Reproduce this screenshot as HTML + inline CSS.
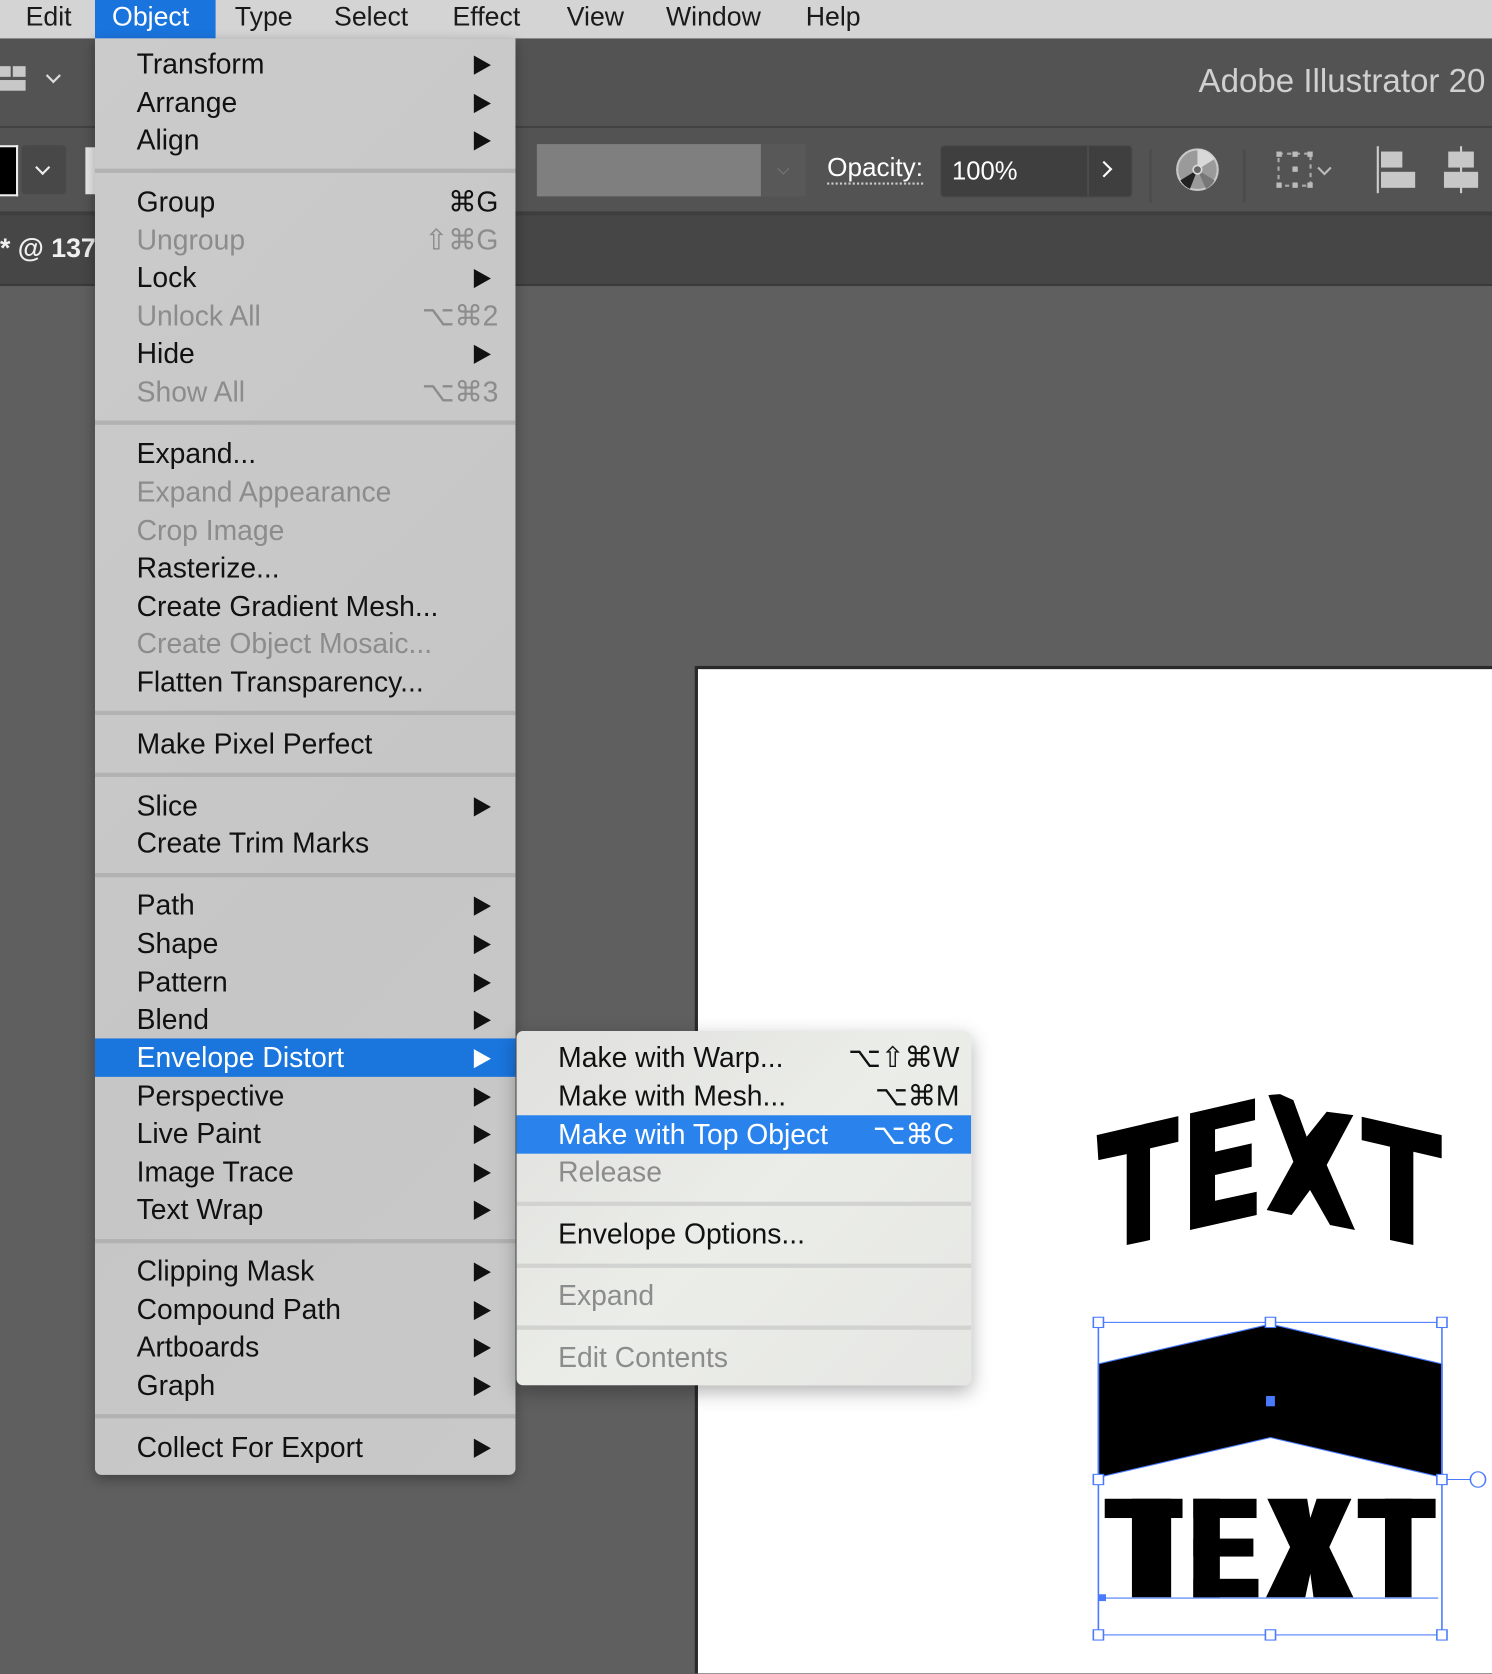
<!DOCTYPE html>
<html><head><meta charset="utf-8">
<style>
html,body{margin:0;padding:0;width:1492px;height:1674px;overflow:hidden;background:#5f5f5f}
#root{position:absolute;left:0;top:0;width:1398px;height:1568px;transform:scale(1.06724);transform-origin:0 0;font-family:"Liberation Sans",sans-serif;background:#5f5f5f;overflow:hidden}
.abs{position:absolute}
.mb{position:absolute;top:0;height:36px;line-height:32px;font-size:25px;color:#1a1a1a}
.it{position:absolute;left:0;width:394px;height:36px;line-height:36px;font-size:26.5px;color:#111}
.it span.t{position:absolute;left:39px}
.it span.a{position:absolute;left:355px;top:10px;width:0;height:0;border-left:16px solid #111;border-top:9px solid transparent;border-bottom:9px solid transparent}
.it span.s{position:absolute;right:16px}
.dis{color:#8c8c8c!important}
.sep{position:absolute;left:0;width:394px;height:4px;background:#b2b2b2}
.sit{position:absolute;left:0;width:426px;height:36px;line-height:36px;font-size:26.5px;color:#111}
.sit span.t{position:absolute;left:39px}
.sit span.s{position:absolute;right:11px}
.ssep{position:absolute;left:0;width:426px;height:4px;background:#d2d3d0}
</style></head><body>
<div id="root">
<div class="abs" style="left:0;top:36px;width:1398px;height:82px;background:#535353"></div>
<div class="abs" style="left:0;top:118px;width:1398px;height:2px;background:#424242"></div>
<div class="abs" style="left:0;top:120px;width:1398px;height:78px;background:#535353"></div>
<div class="abs" style="left:0;top:198px;width:1398px;height:4px;background:#3e3e3e"></div>
<div class="abs" style="left:0;top:202px;width:1398px;height:66px;background:#464646"></div>
<div class="abs" style="left:0;top:266px;width:1398px;height:2px;background:#3a3a3a"></div>
<div class="abs" style="left:1123px;top:58px;font-size:31px;color:#d0d0d0">Adobe Illustrator 20</div>
<div class="abs" style="left:0;top:62px;width:10px;height:10px;background:#c8c8c8"></div>
<div class="abs" style="left:12px;top:62px;width:12px;height:10px;background:#c8c8c8"></div>
<div class="abs" style="left:0;top:75px;width:24px;height:10px;background:#c8c8c8"></div>
<div class="abs" style="left:45px;top:66px;width:8px;height:8px;border-right:2px solid #ddd;border-bottom:2px solid #ddd;transform:rotate(45deg)"></div>
<div class="abs" style="left:0;top:136px;width:15px;height:44px;background:#000;border:2px solid #eee;border-left:none"></div>
<div class="abs" style="left:20px;top:136px;width:42px;height:46px;background:#484848;border-radius:4px"></div>
<div class="abs" style="left:35px;top:152px;width:8px;height:8px;border-right:2px solid #eee;border-bottom:2px solid #eee;transform:rotate(45deg)"></div>
<div class="abs" style="left:80px;top:138px;width:10px;height:44px;background:#e8e8e8"></div>
<div class="abs" style="left:0;top:219px;font-size:25px;font-weight:bold;color:#f0f0f0">* @ 137</div>
<div class="abs" style="left:503px;top:135px;width:210px;height:49px;background:#7f7f7f"></div>
<div class="abs" style="left:713px;top:135px;width:42px;height:49px;background:#585858"></div>
<div class="abs" style="left:730px;top:154px;width:7px;height:7px;border-right:1.5px solid #777;border-bottom:1.5px solid #777;transform:rotate(45deg)"></div>
<div class="abs" style="left:775px;top:145px;font-size:24.5px;color:#fff;border-bottom:2px dotted #ccc;line-height:26px">Opacity:</div>
<div class="abs" style="left:881px;top:136px;width:178px;height:47px;background:#3f3f3f;border:1px solid #4a4a4a;border-radius:4px"></div>
<div class="abs" style="left:1019px;top:137px;width:1px;height:46px;background:#555"></div>
<div class="abs" style="left:892px;top:147px;font-size:24px;color:#fff">100%</div>
<div class="abs" style="left:1029px;top:153px;width:9px;height:9px;border-right:2px solid #fff;border-top:2px solid #fff;transform:rotate(45deg)"></div>
<div class="abs" style="left:1077px;top:140px;width:2px;height:50px;background:#4a4a4a"></div>
<div class="abs" style="left:1165px;top:140px;width:2px;height:50px;background:#4a4a4a"></div>
<svg class="abs" style="left:1100px;top:137px" width="44" height="44" viewBox="0 0 44 44"><circle cx="22" cy="22" r="19" fill="#9a9a9a" stroke="#c8c8c8" stroke-width="2"/><path d="M22 22L22 3A19 19 0 0 1 38 12Z" fill="#d8d8d8"/><path d="M22 22L6 32A19 19 0 0 0 15 40Z" fill="#222"/><path d="M22 22L38 32A19 19 0 0 1 30 40Z" fill="#777"/><circle cx="22" cy="22" r="4" fill="#666" stroke="#ddd" stroke-width="1.5"/></svg>
<svg class="abs" style="left:1194px;top:140px" width="60" height="40" viewBox="0 0 60 40"><rect x="4" y="4" width="30" height="30" fill="none" stroke="#aaa" stroke-width="2" stroke-dasharray="4 4"/><rect x="2" y="2" width="5" height="5" fill="#bbb"/><rect x="17" y="2" width="5" height="5" fill="#bbb"/><rect x="31" y="2" width="5" height="5" fill="#bbb"/><rect x="2" y="31" width="5" height="5" fill="#bbb"/><rect x="17" y="31" width="5" height="5" fill="#bbb"/><rect x="31" y="31" width="5" height="5" fill="#bbb"/><rect x="17" y="16" width="5" height="5" fill="#bbb"/><path d="M41 17l6 6 6-6" fill="none" stroke="#bbb" stroke-width="2"/></svg>
<div class="abs" style="left:1290px;top:137px;width:2px;height:44px;background:#ccc"></div>
<div class="abs" style="left:1294px;top:142px;width:20px;height:15px;background:#c8c8c8"></div>
<div class="abs" style="left:1294px;top:161px;width:32px;height:15px;background:#c8c8c8"></div>
<div class="abs" style="left:1368px;top:137px;width:2px;height:44px;background:#ccc"></div>
<div class="abs" style="left:1357px;top:142px;width:24px;height:15px;background:#c8c8c8"></div>
<div class="abs" style="left:1353px;top:161px;width:32px;height:15px;background:#c8c8c8"></div>
<div class="abs" style="left:651px;top:624px;width:760px;height:960px;background:#2a2a2a"></div>
<div class="abs" style="left:654px;top:627px;width:760px;height:960px;background:#fff"></div>
<svg class="abs" style="left:1012px;top:1012px" width="386" height="168.7" viewBox="0 0 1236 540">
<polygon points="50,165 295,108 295,185 210,205 210,480 140,495 140,222 55,240"/>
<polygon points="330,100 525,55 525,120 405,148 405,215 515,190 515,260 405,285 405,362 530,335 530,405 330,450"/>
<polygon points="565,45 600,42 640,60 680,170 740,95 820,105 740,255 825,450 750,435 690,330 635,405 560,390 640,245"/>
<polygon points="845,110 1085,165 1085,235 1000,215 1000,495 930,480 930,200 845,180"/>
</svg>
<svg class="abs" style="left:468.5px;top:937px" width="929.5" height="629" viewBox="0 0 1568 1568" preserveAspectRatio="none">
<polygon points="945,850 1217,757 1488,850 1488,1115 1217,1022 945,1115" fill="#000" stroke="#4a7bff" stroke-width="2.5"/>
<g fill="#000">
<rect x="955" y="1165" width="123" height="45"/><rect x="998" y="1165" width="62" height="230"/>
<rect x="1095" y="1165" width="100" height="45"/><rect x="1095" y="1165" width="42" height="230"/><rect x="1095" y="1258" width="95" height="42"/><rect x="1095" y="1352" width="103" height="43"/>
<polygon points="1212,1165 1275,1165 1280,1210 1290,1165 1345,1165 1310,1278 1348,1395 1285,1395 1280,1340 1272,1395 1210,1395 1248,1278"/>
<rect x="1355" y="1165" width="123" height="45"/><rect x="1398" y="1165" width="42" height="230"/>
</g>
<line x1="945" y1="1397" x2="1482" y2="1397" stroke="#4a7bff" stroke-width="2.5"/>
<rect x="945" y="753" width="543" height="730" fill="none" stroke="#4a7bff" stroke-width="2.5"/>
<line x1="1488" y1="1120" x2="1533" y2="1120" stroke="#4a7bff" stroke-width="2.5"/>
<ellipse cx="1545" cy="1120" rx="12" ry="18" fill="#fff" stroke="#4a7bff" stroke-width="2.5"/>
<g fill="#fff" stroke="#4a7bff" stroke-width="2.5">
<rect x="937" y="741" width="16" height="24"/><rect x="1209" y="741" width="16" height="24"/><rect x="1480" y="741" width="16" height="24"/>
<rect x="937" y="1108" width="16" height="24"/><rect x="1480" y="1108" width="16" height="24"/>
<rect x="937" y="1471" width="16" height="24"/><rect x="1209" y="1471" width="16" height="24"/><rect x="1480" y="1471" width="16" height="24"/>
</g>
<rect x="1210" y="925" width="14" height="24" fill="#4a7bff"/>
<rect x="945" y="1388" width="12" height="16" fill="#4a7bff"/>
</svg>
<div class="abs" style="left:0;top:0;width:1398px;height:36px;background:#d5d4d5"></div>
<div class="abs" style="left:89px;top:0;width:113px;height:36px;background:#1a74de"></div>
<div class="mb" style="left:24px">Edit</div>
<div class="mb" style="left:105px;color:#fff">Object</div>
<div class="mb" style="left:220px">Type</div>
<div class="mb" style="left:313px">Select</div>
<div class="mb" style="left:424px">Effect</div>
<div class="mb" style="left:531px">View</div>
<div class="mb" style="left:624px">Window</div>
<div class="mb" style="left:755px">Help</div>
<div class="abs" style="left:89px;top:36px;width:394px;height:1346px;background:linear-gradient(135deg,#cbcbcb,#c6c6c6 60%,#c9c9c9);border-radius:0 0 6px 6px;box-shadow:0 4px 12px rgba(0,0,0,.3)">
<div class="it" style="top:6px"><span class="t">Transform</span><span class="a"></span></div>
<div class="it" style="top:42px"><span class="t">Arrange</span><span class="a"></span></div>
<div class="it" style="top:77px"><span class="t">Align</span><span class="a"></span></div>
<div class="sep" style="top:122px"></div>
<div class="it" style="top:135px"><span class="t">Group</span><span class="s">⌘G</span></div>
<div class="it dis" style="top:171px"><span class="t">Ungroup</span><span class="s">⇧⌘G</span></div>
<div class="it" style="top:206px"><span class="t">Lock</span><span class="a"></span></div>
<div class="it dis" style="top:242px"><span class="t">Unlock All</span><span class="s">⌥⌘2</span></div>
<div class="it" style="top:277px"><span class="t">Hide</span><span class="a"></span></div>
<div class="it dis" style="top:313px"><span class="t">Show All</span><span class="s">⌥⌘3</span></div>
<div class="sep" style="top:358px"></div>
<div class="it" style="top:371px"><span class="t">Expand...</span></div>
<div class="it dis" style="top:407px"><span class="t">Expand Appearance</span></div>
<div class="it dis" style="top:443px"><span class="t">Crop Image</span></div>
<div class="it" style="top:478px"><span class="t">Rasterize...</span></div>
<div class="it" style="top:514px"><span class="t">Create Gradient Mesh...</span></div>
<div class="it dis" style="top:549px"><span class="t">Create Object Mosaic...</span></div>
<div class="it" style="top:585px"><span class="t">Flatten Transparency...</span></div>
<div class="sep" style="top:630px"></div>
<div class="it" style="top:643px"><span class="t">Make Pixel Perfect</span></div>
<div class="sep" style="top:688px"></div>
<div class="it" style="top:701px"><span class="t">Slice</span><span class="a"></span></div>
<div class="it" style="top:736px"><span class="t">Create Trim Marks</span></div>
<div class="sep" style="top:782px"></div>
<div class="it" style="top:794px"><span class="t">Path</span><span class="a"></span></div>
<div class="it" style="top:830px"><span class="t">Shape</span><span class="a"></span></div>
<div class="it" style="top:866px"><span class="t">Pattern</span><span class="a"></span></div>
<div class="it" style="top:901px"><span class="t">Blend</span><span class="a"></span></div>
<div class="it" style="top:937px;background:#1a75dd;color:#fff"><span class="t">Envelope Distort</span><span class="a" style="border-left-color:#fff"></span></div>
<div class="it" style="top:973px"><span class="t">Perspective</span><span class="a"></span></div>
<div class="it" style="top:1008px"><span class="t">Live Paint</span><span class="a"></span></div>
<div class="it" style="top:1044px"><span class="t">Image Trace</span><span class="a"></span></div>
<div class="it" style="top:1079px"><span class="t">Text Wrap</span><span class="a"></span></div>
<div class="sep" style="top:1125px"></div>
<div class="it" style="top:1137px"><span class="t">Clipping Mask</span><span class="a"></span></div>
<div class="it" style="top:1173px"><span class="t">Compound Path</span><span class="a"></span></div>
<div class="it" style="top:1208px"><span class="t">Artboards</span><span class="a"></span></div>
<div class="it" style="top:1244px"><span class="t">Graph</span><span class="a"></span></div>
<div class="sep" style="top:1289px"></div>
<div class="it" style="top:1302px"><span class="t">Collect For Export</span><span class="a"></span></div>
</div>
<div class="abs" style="left:484px;top:966px;width:426px;height:332px;background:linear-gradient(135deg,#e0e0de,#ebede8 50%,#e6e7e4);border-radius:6px;box-shadow:0 6px 18px rgba(0,0,0,.3);overflow:hidden">
<div class="sit" style="top:7px"><span class="t">Make with Warp...</span><span class="s">⌥⇧⌘W</span></div>
<div class="sit" style="top:43px"><span class="t">Make with Mesh...</span><span class="s">⌥⌘M</span></div>
<div class="sit" style="top:79px;background:#2a83ec;color:#fff"><span class="t">Make with Top Object</span><span class="s" style="right:16px">⌥⌘C</span></div>
<div class="sit dis" style="top:114px"><span class="t">Release</span></div>
<div class="ssep" style="top:160px"></div>
<div class="sit" style="top:172px"><span class="t">Envelope Options...</span></div>
<div class="ssep" style="top:218px"></div>
<div class="sit dis" style="top:230px"><span class="t">Expand</span></div>
<div class="ssep" style="top:276px"></div>
<div class="sit dis" style="top:288px"><span class="t">Edit Contents</span></div>
</div>
</div>
</body></html>
